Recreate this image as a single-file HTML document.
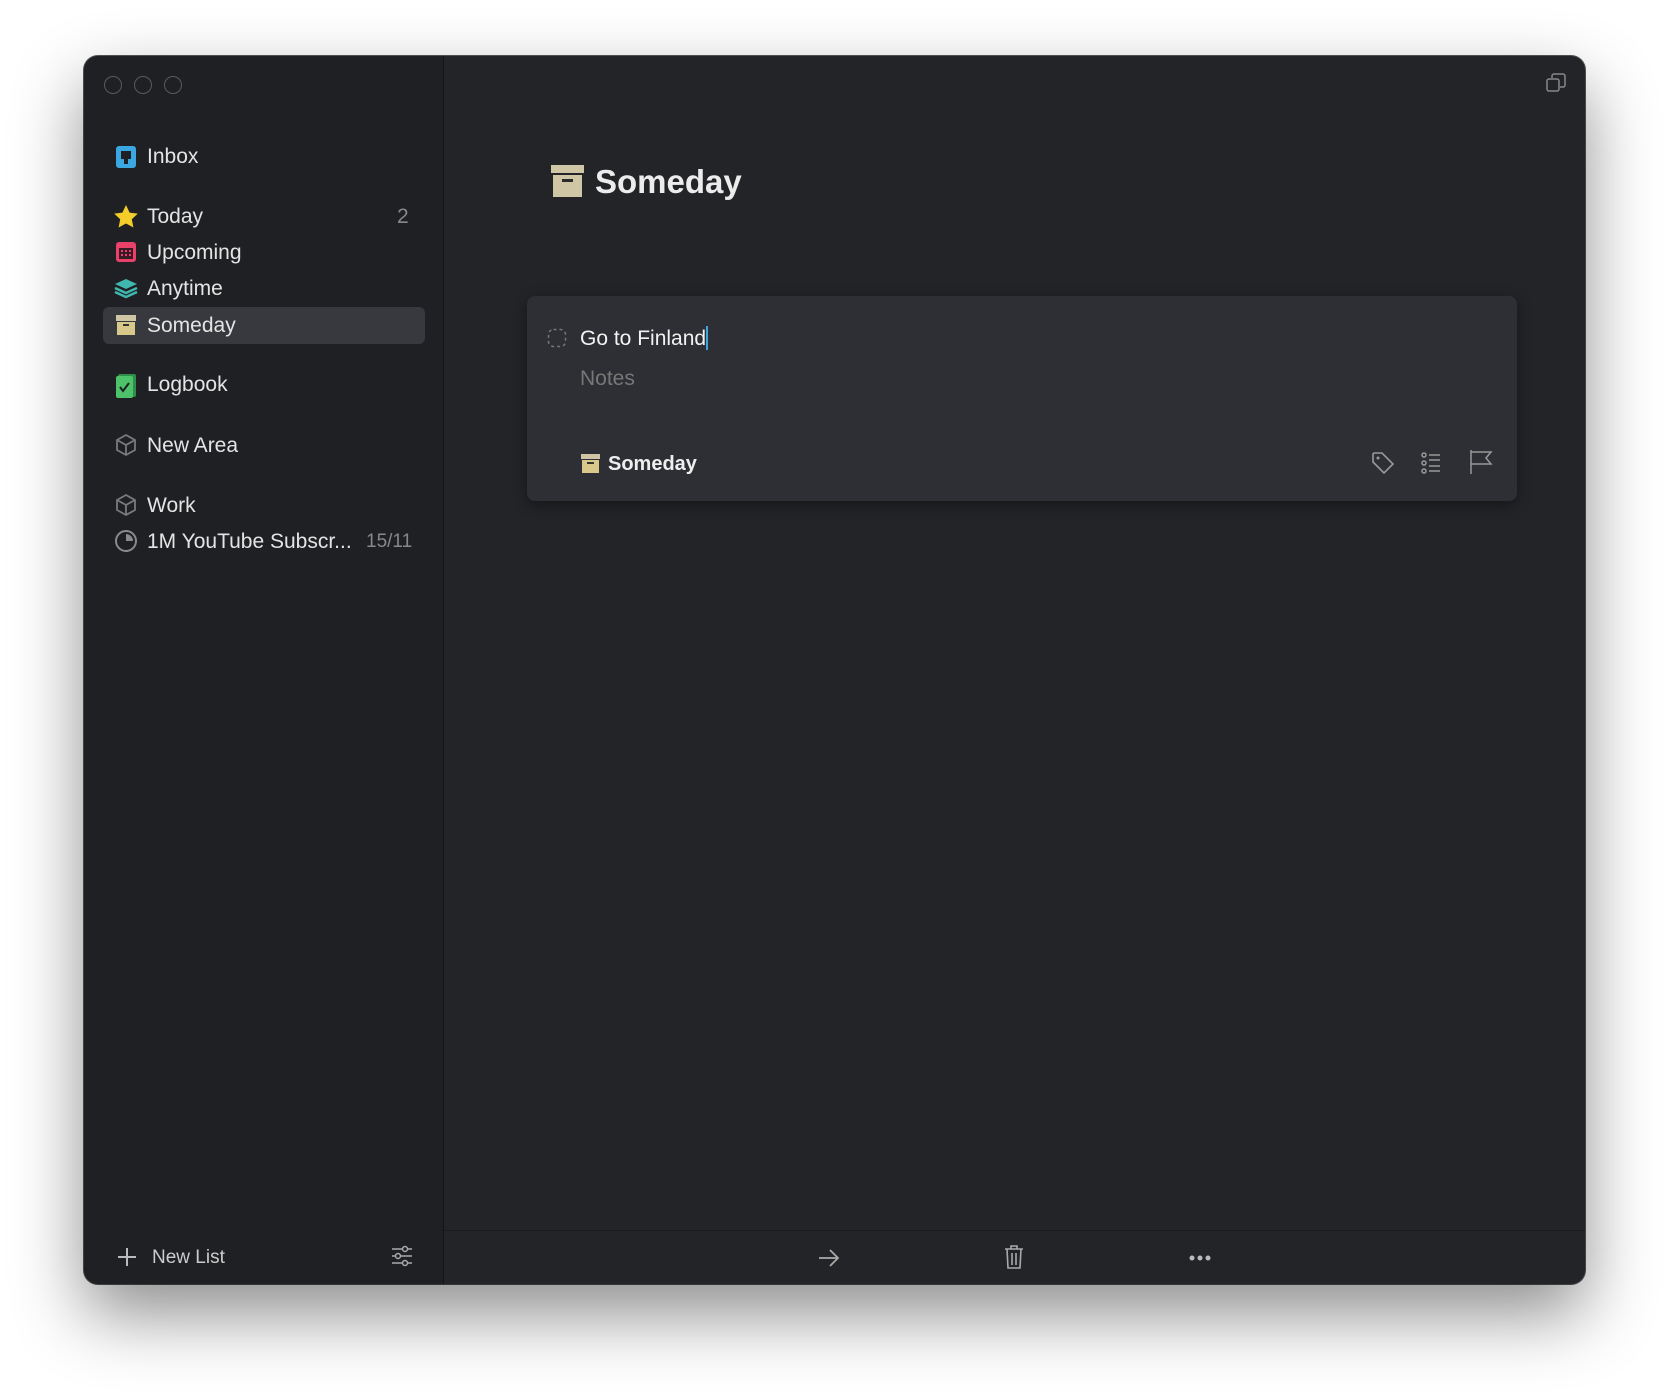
<!DOCTYPE html>
<html><head><meta charset="utf-8"><style>
*{margin:0;padding:0;box-sizing:border-box}
body{width:1668px;height:1396px;background:#fff;font-family:"Liberation Sans",sans-serif;position:relative;overflow:hidden}
.win{position:absolute;left:84px;top:56px;width:1501px;height:1228px;border-radius:14px;background:#232428;overflow:hidden;box-shadow:0 30px 70px rgba(0,0,0,.45),0 0 0 1px #555;}
.side{position:absolute;left:0;top:0;width:360px;height:100%;background:#1f2024;border-right:1px solid #141417}
.t{position:absolute;color:#e4e4e4;font-size:21px;line-height:24px}
.tl{position:absolute;top:20px;width:18px;height:18px;border:1.5px solid #5a5a5e;border-radius:50%}
.ic{position:absolute}
.sel{position:absolute;left:19px;top:251px;width:322px;height:37px;background:#38393e;border-radius:6px}
.card{position:absolute;left:443px;top:240px;width:990px;height:205px;background:#2e2f34;border-radius:8px;box-shadow:0 4px 14px rgba(0,0,0,.4)}
.bar{position:absolute;left:360px;right:0;top:1174px;border-top:1px solid #1a1b1e}
</style></head><body>
<div class="win">
<div class="side">
<div class="tl" style="left:20px"></div><div class="tl" style="left:50px"></div><div class="tl" style="left:80px"></div>
<svg class="ic" style="left:31px;top:89px" width="22" height="24"><rect x="1" y="1" width="20" height="22" rx="3" fill="#3aa7e0"/><path d="M6 6h10v8h-3v5h-4v-5H6z" fill="#1f2024"/></svg>
<div class="t" style="left:63px;top:89px">Inbox</div>
<svg class="ic" style="left:29px;top:148px" width="26" height="25"><path d="M13 1l3.6 7.6 8.2 1-6 5.7 1.6 8.2L13 19.5 5.6 23.5l1.6-8.2-6-5.7 8.2-1z" fill="#f5cd2b"/></svg>
<div class="t" style="left:63px;top:149px">Today</div>
<div class="t" style="left:313px;top:149px;color:#888">2</div>
<svg class="ic" style="left:31px;top:185px" width="22" height="22"><rect x="1" y="1" width="20" height="20" rx="3" fill="#e9416a"/><rect x="4" y="7" width="14" height="11" fill="#3a1a24"/><g fill="#e9416a"><rect x="6" y="9" width="2" height="2"/><rect x="10" y="9" width="2" height="2"/><rect x="14" y="9" width="2" height="2"/><rect x="6" y="13" width="2" height="2"/><rect x="10" y="13" width="2" height="2"/><rect x="14" y="13" width="2" height="2"/></g></svg>
<div class="t" style="left:63px;top:185px">Upcoming</div>
<svg class="ic" style="left:30px;top:220px" width="24" height="24"><path d="M12 13l11-5-11-5-11 5z" fill="#3fb8b0"/><path d="M1 12l11 5 11-5" stroke="#3fb8b0" stroke-width="2.5" fill="none"/><path d="M1 16l11 5 11-5" stroke="#3fb8b0" stroke-width="2.5" fill="none"/></svg>
<div class="t" style="left:63px;top:221px">Anytime</div>
<div class="sel"></div>
<svg class="ic" style="left:31px;top:258px" width="22" height="22"><rect x="1" y="1" width="20" height="6" fill="#cfc6a6"/><rect x="2" y="8" width="18" height="13" fill="#d8c88a"/><rect x="8" y="10" width="6" height="2" fill="#333"/></svg>
<div class="t" style="left:63px;top:258px">Someday</div>
<svg class="ic" style="left:31px;top:317px" width="22" height="26"><rect x="3" y="1" width="18" height="23" rx="2" fill="#2d8f4a"/><rect x="1" y="3" width="17" height="22" rx="2" fill="#4dc26b"/><path d="M5 14l3 4 6-8" stroke="#1f2024" stroke-width="2" fill="none"/></svg>
<div class="t" style="left:63px;top:317px">Logbook</div>
<svg class="ic" style="left:30px;top:377px" width="24" height="24"><path d="M12 2l9 5v10l-9 5-9-5V7z M3 7l9 5 9-5 M12 12v10" stroke="#7a7a7e" stroke-width="1.8" fill="none"/></svg>
<div class="t" style="left:63px;top:378px">New Area</div>
<svg class="ic" style="left:30px;top:437px" width="24" height="24"><path d="M12 2l9 5v10l-9 5-9-5V7z M3 7l9 5 9-5 M12 12v10" stroke="#7a7a7e" stroke-width="1.8" fill="none"/></svg>
<div class="t" style="left:63px;top:438px">Work</div>
<svg class="ic" style="left:30px;top:473px" width="24" height="24"><circle cx="12" cy="12" r="10" stroke="#8a8a8e" stroke-width="2" fill="none"/><path d="M12 12V5a7 7 0 0 1 7 7z" fill="#8a8a8e"/></svg>
<div class="t" style="left:63px;top:474px">1M YouTube Subscr...</div>
<div class="t" style="left:282px;top:474px;color:#888;font-size:19px">15/11</div>
<svg class="ic" style="left:33px;top:1191px" width="20" height="20"><path d="M10 1v18M1 10h18" stroke="#bbb" stroke-width="2"/></svg>
<div class="t" style="left:68px;top:1190px;font-size:19px;color:#ccc">New List</div>
<svg class="ic" style="left:307px;top:1189px" width="22" height="22"><path d="M1 4h20M1 11h20M1 18h20" stroke="#aaa" stroke-width="1.5"/><circle cx="14" cy="4" r="2.5" fill="#1f2024" stroke="#aaa" stroke-width="1.5"/><circle cx="7" cy="11" r="2.5" fill="#1f2024" stroke="#aaa" stroke-width="1.5"/><circle cx="14" cy="18" r="2.5" fill="#1f2024" stroke="#aaa" stroke-width="1.5"/></svg>
</div>
<svg class="ic" style="left:1462px;top:17px" width="20" height="20"><rect x="1" y="6" width="12" height="12" rx="2" stroke="#888" stroke-width="1.5" fill="none"/><path d="M6 5V3a2 2 0 0 1 2-2h9a2 2 0 0 1 2 2v9a2 2 0 0 1-2 2h-3" stroke="#888" stroke-width="1.5" fill="none"/></svg>
<svg class="ic" style="left:467px;top:109px" width="33" height="32"><rect x="0" y="0" width="33" height="8" fill="#cfc6a6"/><rect x="2" y="10" width="29" height="22" fill="#cfc6a6"/><rect x="11" y="14" width="11" height="3" fill="#2a2a2a"/></svg>
<div class="t" style="left:511px;top:106px;font-size:33px;line-height:40px;font-weight:bold;color:#ececec">Someday</div>
<div class="card">
<svg class="ic" style="left:20px;top:32px" width="20" height="20"><rect x="1.5" y="1.5" width="17" height="17" rx="5" stroke="#777" stroke-width="1.5" stroke-dasharray="3 3" fill="none"/></svg>
<div class="t" style="left:53px;top:30px;font-size:21px;color:#f2f2f2">Go to Finland<span style="display:inline-block;width:2px;height:24px;background:#3aa7e0;vertical-align:-5px"></span></div>
<div class="t" style="left:53px;top:71px;font-size:21px;color:#777">Notes</div>
<svg class="ic" style="left:54px;top:158px" width="19" height="19"><rect x="0" y="0" width="19" height="5" fill="#cfc6a6"/><rect x="1" y="6" width="17" height="13" fill="#d8c88a"/><rect x="6" y="8" width="7" height="2" fill="#333"/></svg>
<div class="t" style="left:81px;top:156px;font-weight:bold;color:#eee;font-size:20px">Someday</div>
<svg class="ic" style="left:844px;top:155px" width="24" height="24"><path d="M2 3v8l11 11 9-9L11 2H3z" stroke="#999" stroke-width="1.6" fill="none"/><circle cx="7" cy="7" r="1.5" fill="#999"/></svg>
<svg class="ic" style="left:893px;top:155px" width="22" height="24"><g stroke="#999" stroke-width="1.5" fill="none"><circle cx="4" cy="4" r="2"/><circle cx="4" cy="12" r="2"/><circle cx="4" cy="20" r="2"/><path d="M9 4h11M9 9h11M9 15h11M9 20h11"/></g></svg>
<svg class="ic" style="left:942px;top:153px" width="24" height="26"><path d="M2 1v24M2 3h20l-5 6 5 6H2" stroke="#999" stroke-width="1.5" fill="none"/></svg>
</div>
<div class="bar"></div>
<svg class="ic" style="left:734px;top:1191px" width="22" height="22"><path d="M1 11h19M12 3l8 8-8 8" stroke="#aaa" stroke-width="1.8" fill="none"/></svg>
<svg class="ic" style="left:920px;top:1189px" width="20" height="24"><path d="M1 4h18M7 4V1h6v3M3 4l1 19h12l1-19M8 8v12M12 8v12" stroke="#aaa" stroke-width="1.6" fill="none"/></svg>
<svg class="ic" style="left:1104px;top:1198px" width="24" height="8"><circle cx="4" cy="4" r="2.5" fill="#bbb"/><circle cx="12" cy="4" r="2.5" fill="#bbb"/><circle cx="20" cy="4" r="2.5" fill="#bbb"/></svg>
</div>
</body></html>
